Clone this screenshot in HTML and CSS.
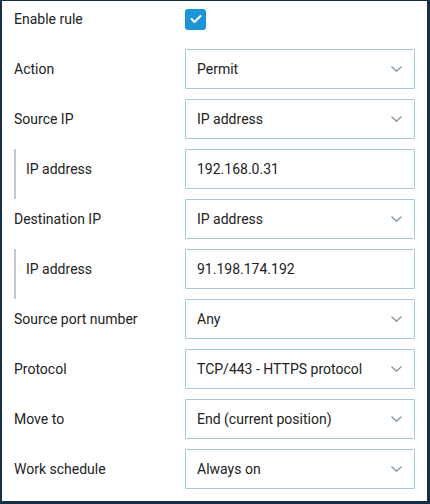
FILE: index.html
```html
<!DOCTYPE html>
<html>
<head>
<meta charset="utf-8">
<link rel="stylesheet" href="styles.css">
</head>
<body>
<div class="frame">
  <div class="row row-check">
    <div class="label">Enable rule</div>
    <div class="checkbox">
      <svg width="12" height="10" viewBox="0 0 12 10"><path d="M1.5 5 L4.5 8 L10.5 2" fill="none" stroke="#fff" stroke-width="2" stroke-linecap="round" stroke-linejoin="round"/></svg>
    </div>
  </div>
  <div class="row">
    <div class="label">Action</div>
    <div class="field select"><span>Permit</span><svg class="chev" width="11" height="6" viewBox="0 0 11 6"><path d="M0.5 0.5 L5.5 5.3 L10.5 0.5" fill="none" stroke="#8293a3" stroke-width="1.2"/></svg></div>
  </div>
  <div class="row">
    <div class="label">Source IP</div>
    <div class="field select"><span>IP address</span><svg class="chev" width="11" height="6" viewBox="0 0 11 6"><path d="M0.5 0.5 L5.5 5.3 L10.5 0.5" fill="none" stroke="#8293a3" stroke-width="1.2"/></svg></div>
  </div>
  <div class="row">
    <div class="sub"><div class="label">IP address</div></div>
    <div class="field"><span>192.168.0.31</span></div>
  </div>
  <div class="row">
    <div class="label">Destination IP</div>
    <div class="field select"><span>IP address</span><svg class="chev" width="11" height="6" viewBox="0 0 11 6"><path d="M0.5 0.5 L5.5 5.3 L10.5 0.5" fill="none" stroke="#8293a3" stroke-width="1.2"/></svg></div>
  </div>
  <div class="row">
    <div class="sub"><div class="label">IP address</div></div>
    <div class="field"><span>91.198.174.192</span></div>
  </div>
  <div class="row">
    <div class="label">Source port number</div>
    <div class="field select"><span>Any</span><svg class="chev" width="11" height="6" viewBox="0 0 11 6"><path d="M0.5 0.5 L5.5 5.3 L10.5 0.5" fill="none" stroke="#8293a3" stroke-width="1.2"/></svg></div>
  </div>
  <div class="row">
    <div class="label">Protocol</div>
    <div class="field select"><span>TCP/443 - HTTPS protocol</span><svg class="chev" width="11" height="6" viewBox="0 0 11 6"><path d="M0.5 0.5 L5.5 5.3 L10.5 0.5" fill="none" stroke="#8293a3" stroke-width="1.2"/></svg></div>
  </div>
  <div class="row">
    <div class="label">Move to</div>
    <div class="field select"><span>End (current position)</span><svg class="chev" width="11" height="6" viewBox="0 0 11 6"><path d="M0.5 0.5 L5.5 5.3 L10.5 0.5" fill="none" stroke="#8293a3" stroke-width="1.2"/></svg></div>
  </div>
  <div class="row last">
    <div class="label">Work schedule</div>
    <div class="field select"><span>Always on</span><svg class="chev" width="11" height="6" viewBox="0 0 11 6"><path d="M0.5 0.5 L5.5 5.3 L10.5 0.5" fill="none" stroke="#8293a3" stroke-width="1.2"/></svg></div>
  </div>
</div>
</body>
</html>
```
FILE: styles.css
```css
html, body {
  margin: 0;
  padding: 0;
  background: #fff;
}
.frame {
  width: 430px;
  height: 504px;
  box-sizing: border-box;
  border-style: solid;
  border-color: #172f44;
  border-width: 1px 3px 3px 2px;
  padding: 0 12px 0 12px;
  font-family: Roboto, "Liberation Sans", sans-serif;
  font-size: 14px;
  color: #222;
  background: #fff;
}
.row {
  display: grid;
  grid-template-columns: 171px 230px;
  height: 50px;
}
.row-check {
  height: 36px;
  margin-bottom: 12px;
  align-items: center;
}
.label {
  height: 39px;
  display: flex;
  align-items: center;
}
.row-check .label {
  height: 35px;
}
.sub {
  border-left: 2px solid #c8c8c8;
  padding-left: 10px;
  height: 50px;
  box-sizing: border-box;
}
.checkbox {
  width: 21px;
  height: 21px;
  border-radius: 3px;
  background: #1a95d7;
  display: flex;
  align-items: center;
  justify-content: center;
}
.field {
  height: 40px;
  box-sizing: border-box;
  border: 1px solid #a6cbd7;
  border-radius: 1px;
  display: flex;
  align-items: center;
  justify-content: space-between;
  padding: 0 12px 1px 11px;
  background: #fff;
}
.chev {
  display: block;
  margin-top: 1px;
}
```
